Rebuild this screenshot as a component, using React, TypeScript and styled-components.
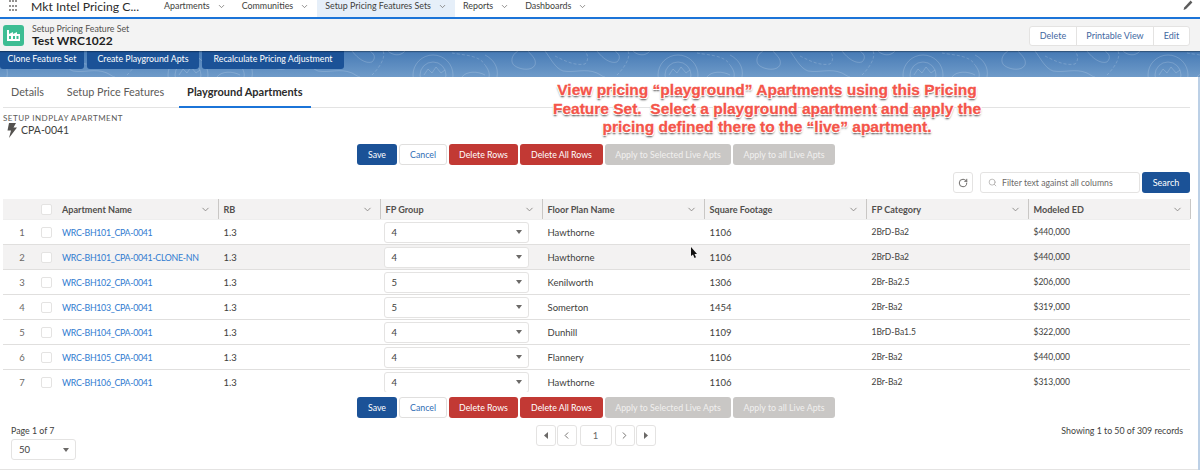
import React from 'react';
import styled, { createGlobalStyle } from 'styled-components';
import { ChevronDown, RotateCw, Search, ChevronLeft, ChevronRight } from 'lucide-react';

const Global = createGlobalStyle`
  html, body { margin: 0; padding: 0; background: #fff; }
  body { font-family: Lato, "Open Sans", "Liberation Sans", sans-serif; color: #3e3e3c; font-size: 9.5px; }
  * { box-sizing: border-box; }
`;

const Page = styled.div`
  width: 1200px;
  height: 470px;
  overflow: hidden;
  background: #bcd0e6;
  display: flex;
  flex-direction: column;
`;

/* top nav */
const Nav = styled.nav`
  height: 19px;
  background: #fff;
  border-bottom: 2px solid #1b74d8;
  display: flex;
  align-items: flex-start;
  flex: none;
`;

const Waffle = styled.div`
  width: 8px;
  margin: 0 0 0 9px;
  display: grid;
  grid-template-columns: repeat(3, 2px);
  gap: 2.5px 1px;
  span { height: 2px; background: #706e6b; border-radius: 1px; }
`;

const AppName = styled.div`
  margin-left: 14px;
  width: 125px;
  font-size: 12.2px;
  line-height: 13px;
  color: #2b2b2b;
  white-space: nowrap;
`;

const NavItem = styled.div<{ $active?: boolean }>`
  height: 17px;
  padding: 0 8px;
  display: flex;
  align-items: flex-start;
  gap: 7px;
  font-size: 8.9px;
  line-height: 12px;
  color: #3e3e3c;
  background: ${(p) => (p.$active ? '#e6eff9' : 'transparent')};
  svg { margin-top: 2px; color: #706e6b; }
`;

const PencilSlot = styled.div`
  margin-left: auto;
  margin-right: 7px;
  color: #5c5c5c;
`;

/* record header */
const RecordHeader = styled.header`
  height: 32px;
  flex: none;
  background: #f3f3f3;
  box-shadow: 0 1px 1px rgba(0, 0, 0, 0.3);
  display: flex;
  align-items: center;
  padding: 0 10px 0 3px;
  position: relative;
  z-index: 1;
`;

const Logo = styled.div`
  width: 21px;
  height: 21px;
  border-radius: 3px;
  background: #3dbd93;
  display: flex;
  align-items: center;
  justify-content: center;
  margin-right: 8px;
`;

const Titles = styled.div`
  display: flex;
  flex-direction: column;
`;

const Subtitle = styled.div`
  font-size: 8.8px;
  line-height: 11px;
  color: #54524f;
`;

const Title = styled.div`
  font-size: 12px;
  line-height: 14px;
  font-weight: 700;
  color: #1f1f1f;
`;

const ButtonGroup = styled.div`
  margin-left: auto;
  margin-top: 1px;
  display: flex;
  height: 20px;
  background: #fff;
  border: 1px solid #e4e3e2;
  border-radius: 3px;
`;

const GroupButton = styled.div<{ $w: number }>`
  width: ${(p) => p.$w}px;
  display: flex;
  align-items: center;
  justify-content: center;
  color: #43689f;
  font-size: 9px;
  & + & { border-left: 1px solid #e4e3e2; }
`;

/* banner */
const Banner = styled.div`
  height: 26px;
  flex: none;
  position: relative;
  background: linear-gradient(#467ab5, #6f9bc9);
  display: flex;
  align-items: flex-start;
  gap: 3px;
  overflow: hidden;
`;

const Topo = styled.svg`
  position: absolute;
  inset: 0;
  width: 100%;
  height: 100%;
`;

const BannerButton = styled.div<{ $w: number }>`
  position: relative;
  width: ${(p) => p.$w}px;
  height: 18px;
  padding-bottom: 3px;
  background: #1b5297;
  color: #fff;
  font-size: 8.8px;
  display: flex;
  align-items: center;
  justify-content: center;
  border-radius: 0 0 3px 3px;
`;

/* card */
const Card = styled.main`
  flex: 1;
  margin-right: 2px;
  padding: 0 8px 0 3px;
  background: #fff;
  position: relative;
  border-bottom: 1px solid #e4e3e2;
  overflow: hidden;
`;

const Tabs = styled.div`
  height: 31px;
  border-bottom: 1px solid #e3e3e3;
  display: flex;
  gap: 7px;
`;

const Tab = styled.div<{ $active?: boolean }>`
  height: 31px;
  padding: 0 8px;
  display: flex;
  align-items: center;
  font-size: ${(p) => (p.$active ? 11 : 10.8)}px;
  color: ${(p) => (p.$active ? '#2b2b2b' : '#5b5a58')};
  font-weight: ${(p) => (p.$active ? 700 : 400)};
  border-bottom: 2px solid ${(p) => (p.$active ? '#1b74d8' : 'transparent')};
`;

const FieldLabel = styled.div`
  margin-top: 6px;
  font-size: 8px;
  line-height: 9px;
  letter-spacing: 0.5px;
  color: #5b5a58;
`;

const FieldValue = styled.div`
  display: flex;
  align-items: center;
  gap: 3px;
  height: 14px;
  font-size: 10.5px;
  color: #3e3e3c;
  margin-left: 3px;
`;

const ActionRow = styled.div<{ $top: number }>`
  margin-top: ${(p) => p.$top}px;
  display: flex;
  justify-content: center;
  gap: 2px;
  height: 21px;
  padding-right: 1px;
`;

const ActionButton = styled.div<{ $kind: 'brand' | 'plain' | 'danger' | 'off'; $w: number }>`
  width: ${(p) => p.$w}px;
  height: 21px;
  border-radius: 3px;
  display: flex;
  align-items: center;
  justify-content: center;
  font-size: 8.8px;
  color: ${(p) => (p.$kind === 'plain' ? '#2f6db5' : p.$kind === 'off' ? '#f1f0ef' : '#fff')};
  background: ${(p) =>
    p.$kind === 'brand' ? '#1b5297' : p.$kind === 'danger' ? '#c23934' : p.$kind === 'off' ? '#c9c7c5' : '#fff'};
  border: 1px solid ${(p) => (p.$kind === 'plain' ? '#e0dfde' : 'transparent')};
`;

const Toolbar = styled.div`
  margin-top: 7px;
  height: 21px;
  display: flex;
  justify-content: flex-end;
  align-items: stretch;
`;

const IconBox = styled.div`
  width: 20px;
  border: 1px solid #e4e3e2;
  border-radius: 3px;
  display: flex;
  align-items: center;
  justify-content: center;
  color: #54524f;
  margin-right: 7px;
`;

const FilterBox = styled.div`
  width: 160px;
  border: 1px solid #e4e3e2;
  border-radius: 3px;
  display: flex;
  align-items: center;
  gap: 5px;
  padding-left: 7px;
  color: #6b6967;
  font-size: 8.7px;
  svg { color: #a9a7a5; }
`;

const SearchButton = styled.div`
  width: 48px;
  margin-left: 2px;
  background: #1b5297;
  color: #fff;
  border-radius: 3px;
  display: flex;
  align-items: center;
  justify-content: center;
  font-size: 9px;
`;

/* grid */
const HeadRow = styled.div`
  margin-top: 6px;
  height: 21px;
  background: #f3f2f2;
  display: grid;
  grid-template-columns: 38px 21px 156.5px repeat(6, 162px);
  border-bottom: 1px solid #eeeeee;
`;

const HeadCell = styled.div<{ $edge?: boolean }>`
  display: flex;
  align-items: center;
  justify-content: space-between;
  padding: 0 7px 0 ${(p) => (p.$edge ? 0 : 5)}px;
  font-size: 9.1px;
  font-weight: 700;
  color: #514f4d;
  border-right: 1px solid #c9c7c5;
  svg { color: #8a8886; }
`;

const Body = styled.div`
  height: 172px;
  overflow: hidden;
`;

const Row = styled.div<{ $hover?: boolean }>`
  height: 25px;
  display: grid;
  grid-template-columns: 38px 21px 156.5px repeat(6, 162px);
  align-items: center;
  background: ${(p) => (p.$hover ? '#f3f2f2' : '#fff')};
  border-bottom: 1px solid #e0dfde;
  font-size: 9.5px;
`;

const RowNum = styled.div`
  text-align: center;
  color: #6b6967;
`;

const Check = styled.div`
  align-self: center;
  width: 11px;
  height: 11px;
  background: #fff;
  border: 1px solid #e4e3e2;
  border-radius: 2px;
`;

const Cell = styled.div<{ $narrow?: boolean }>`
  padding-left: 5px;
  color: #3e3e3c;
  font-size: ${(p) => (p.$narrow ? 8.5 : 9.5)}px;
`;

const NameLink = styled.div`
  color: #2f7bd0;
  white-space: nowrap;
  font-size: 8.8px;
  letter-spacing: -0.3px;
`;

const FakeSelect = styled.div<{ $w: number }>`
  width: ${(p) => p.$w}px;
  height: 21px;
  background: #fff;
  border: 1px solid #e4e3e2;
  border-radius: 3px;
  display: flex;
  align-items: center;
  justify-content: space-between;
  padding: 0 6px 0 7px;
  color: #3e3e3c;
  font-size: 9.5px;
`;

const SelectCell = styled.div`
  padding-left: 3px;
`;

const Caret = styled.span`
  width: 0;
  height: 0;
  border-left: 3.5px solid transparent;
  border-right: 3.5px solid transparent;
  border-top: 4px solid #6b6967;
`;

/* footer */
const Footer = styled.div`
  margin-top: 7px;
  display: grid;
  grid-template-columns: 1fr auto 1fr;
`;

const PageInfo = styled.div`
  padding-left: 8px;
  display: flex;
  flex-direction: column;
  gap: 2px;
  line-height: 12px;
  font-size: 8.8px;
`;

const Pager = styled.div`
  display: flex;
  gap: 1px;
  height: 21px;
  margin-left: -2px;
`;

const PageButton = styled.div<{ $w?: number; $gap?: boolean }>`
  width: ${(p) => p.$w ?? 20}px;
  margin: ${(p) => (p.$gap ? '0 2px' : '0')};
  border: 1px solid #e4e3e2;
  border-radius: 3px;
  display: flex;
  align-items: center;
  justify-content: center;
  color: #6b6967;
  font-size: 9.5px;
`;

const Showing = styled.div`
  text-align: right;
  padding-right: 7px;
  line-height: 12px;
  color: #3e3e3c;
  font-size: 8.8px;
`;

/* overlays */
const Callout = styled.div`
  position: absolute;
  left: 500px;
  top: 4px;
  width: 534px;
  text-align: center;
  font-family: "Liberation Sans", Arial, sans-serif;
  font-weight: 700;
  font-size: 15.5px;
  line-height: 18.5px;
  color: #f4554a;
  -webkit-text-stroke: 0.3px #f4554a;
  text-shadow:
    -1px -1px 0 #fff, 1px -1px 0 #fff, -1px 1px 0 #fff, 1px 1px 0 #fff,
    0 -1px 0 #fff, 0 1px 0 #fff, -1px 0 0 #fff, 1px 0 0 #fff,
    0 2px 2px rgba(0, 0, 0, 0.8);
`;

const Cursor = styled.svg`
  position: absolute;
  left: 690px;
  top: 170px;
`;

const rows = [
  ['WRC-BH101_CPA-0041', '4', 'Hawthorne', '1106', '2BrD-Ba2', '$440,000'],
  ['WRC-BH101_CPA-0041-CLONE-NN', '4', 'Hawthorne', '1106', '2BrD-Ba2', '$440,000'],
  ['WRC-BH102_CPA-0041', '5', 'Kenilworth', '1306', '2Br-Ba2.5', '$206,000'],
  ['WRC-BH103_CPA-0041', '5', 'Somerton', '1454', '2Br-Ba2', '$319,000'],
  ['WRC-BH104_CPA-0041', '4', 'Dunhill', '1109', '1BrD-Ba1.5', '$322,000'],
  ['WRC-BH105_CPA-0041', '4', 'Flannery', '1106', '2Br-Ba2', '$440,000'],
  ['WRC-BH106_CPA-0041', '4', 'Hawthorne', '1106', '2Br-Ba2', '$313,000'],
];

const columns = ['RB', 'FP Group', 'Floor Plan Name', 'Square Footage', 'FP Category', 'Modeled ED'];

const Actions = ({ top }: { top: number }) => (
  <ActionRow $top={top}>
    <ActionButton $kind="brand" $w={40}>Save</ActionButton>
    <ActionButton $kind="plain" $w={48}>Cancel</ActionButton>
    <ActionButton $kind="danger" $w={69}>Delete Rows</ActionButton>
    <ActionButton $kind="danger" $w={83}>Delete All Rows</ActionButton>
    <ActionButton $kind="off" $w={126}>Apply to Selected Live Apts</ActionButton>
    <ActionButton $kind="off" $w={102}>Apply to all Live Apts</ActionButton>
  </ActionRow>
);

const TopoLines = () => (
  <Topo aria-hidden="true">
    <defs>
      <pattern id="topo" width="245" height="26" patternUnits="userSpaceOnUse" patternTransform="translate(-5 0)">
        <g fill="none" stroke="rgba(255,255,255,0.22)" strokeWidth="0.8">
          <path d="M33 0C26 4 25 12 30 15C36 19 47 20 50 14C52 8 46 4 43 0" />
          <path d="M60 0C66 8 70 17 78 20C90 22 100 17 112 22C116 24 118 26 120 26" />
          <path d="M70 5C80 10 90 15 100 13C104 9 103 4 100 0" strokeDasharray="3 2" />
          <path d="M112 0C118 8 126 13 132 11C137 6 133 2 130 0" />
          <path d="M148 0C152 4 160 6 165 0" />
          <path d="M143 0C146 6 140 16 132 24" strokeDasharray="3 2" />
          <circle cx="193" cy="24" r="20" />
          <circle cx="193" cy="24" r="13" />
          <path d="M184 24L188 18L192 22L196 16L201 22L205 19" />
          <path d="M212 2C222 4 240 4 245 14" strokeDasharray="3 2" />
          <path d="M222 26C226 20 238 20 245 24" />
          <path d="M0 4C8 8 14 16 12 26" />
          <path d="M0 14C3 18 5 22 4 26" />
        </g>
      </pattern>
    </defs>
    <rect width="100%" height="100%" fill="url(#topo)" />
  </Topo>
);

export default function App() {
  return (
    <Page>
      <Global />
      <Nav>
        <Waffle>{Array.from({ length: 9 }, (_, i) => <span key={i} />)}</Waffle>
        <AppName>Mkt Intel Pricing C...</AppName>
        <NavItem>Apartments <ChevronDown size={9} /></NavItem>
        <NavItem>Communities <ChevronDown size={9} /></NavItem>
        <NavItem $active>Setup Pricing Features Sets <ChevronDown size={9} /></NavItem>
        <NavItem>Reports <ChevronDown size={9} /></NavItem>
        <NavItem>Dashboards <ChevronDown size={9} /></NavItem>
        <PencilSlot>
          <svg width="10" height="11" viewBox="0 0 10 11">
            <path d="M7.6 0.6L9.4 2.4L3 9L0.6 10L1.2 7.4Z" fill="currentColor" />
          </svg>
        </PencilSlot>
      </Nav>

      <RecordHeader>
        <Logo>
          <svg width="15" height="13" viewBox="0 0 15 13">
            <path d="M1 1H3V5L7 3V5L11 3V5H14V12H1Z" fill="#fff" />
            <path d="M3 7H5V10H3ZM7 7H9V10H7ZM10.500 7H12.500V10H10.500Z" fill="#3dbd93" />
          </svg>
        </Logo>
        <Titles>
          <Subtitle>Setup Pricing Feature Set</Subtitle>
          <Title>Test WRC1022</Title>
        </Titles>
        <ButtonGroup>
          <GroupButton $w={46}>Delete</GroupButton>
          <GroupButton $w={77}>Printable View</GroupButton>
          <GroupButton $w={36}>Edit</GroupButton>
        </ButtonGroup>
      </RecordHeader>

      <Banner>
        <TopoLines />
        <BannerButton $w={84}>Clone Feature Set</BannerButton>
        <BannerButton $w={112}>Create Playground Apts</BannerButton>
        <BannerButton $w={142}>Recalculate Pricing Adjustment</BannerButton>
      </Banner>

      <Card>
        <Tabs>
          <Tab>Details</Tab>
          <Tab>Setup Price Features</Tab>
          <Tab $active>Playground Apartments</Tab>
        </Tabs>
        <FieldLabel>SETUP INDPLAY APARTMENT</FieldLabel>
        <FieldValue>
          <svg width="12" height="15" viewBox="0 0 12 15">
            <path d="M3 0H10L7.500 4.500H11L3 15L5 7.500H1.500Z" fill="#54524f" />
          </svg>
          CPA-0041
        </FieldValue>

        <Actions top={7} />

        <Toolbar>
          <IconBox><RotateCw size={10} /></IconBox>
          <FilterBox><Search size={9} />Filter text against all columns</FilterBox>
          <SearchButton>Search</SearchButton>
        </Toolbar>

        <HeadRow>
          <span />
          <Check />
          <HeadCell $edge>Apartment Name <ChevronDown size={11} /></HeadCell>
          {columns.map((c) => (
            <HeadCell key={c}>{c} <ChevronDown size={11} /></HeadCell>
          ))}
        </HeadRow>

        <Body>
          {rows.map((r, i) => (
            <Row key={r[0]} $hover={i === 1}>
              <RowNum>{i + 1}</RowNum>
              <Check />
              <NameLink>{r[0]}</NameLink>
              <Cell>1.3</Cell>
              <SelectCell>
                <FakeSelect $w={145}>{r[1]}<Caret /></FakeSelect>
              </SelectCell>
              <Cell>{r[2]}</Cell>
              <Cell>{r[3]}</Cell>
              <Cell $narrow>{r[4]}</Cell>
              <Cell $narrow>{r[5]}</Cell>
            </Row>
          ))}
        </Body>

        <Actions top={5} />

        <Footer>
          <PageInfo>
            Page 1 of 7
            <FakeSelect $w={65}>50<Caret /></FakeSelect>
          </PageInfo>
          <Pager>
            <PageButton>
              <svg width="6" height="7" viewBox="0 0 6 7"><path d="M5 0V7L1 3.500Z" fill="#6b6967" /></svg>
            </PageButton>
            <PageButton><ChevronLeft size={11} /></PageButton>
            <PageButton $w={32} $gap>1</PageButton>
            <PageButton><ChevronRight size={11} /></PageButton>
            <PageButton>
              <svg width="6" height="7" viewBox="0 0 6 7"><path d="M1 0V7L5 3.500Z" fill="#6b6967" /></svg>
            </PageButton>
          </Pager>
          <Showing>Showing 1 to 50 of 309 records</Showing>
        </Footer>

        <Callout>
          View pricing “playground” Apartments using this Pricing
          <br />
          Feature Set.&nbsp; Select a playground apartment and apply the
          <br />
          pricing defined there to the “live” apartment.
        </Callout>

        <Cursor width="8" height="12" viewBox="0 0 8 12">
          <path d="M1 0V9L3 7.500L4.500 11L6 10.300L4.500 7H7Z" fill="#111" />
        </Cursor>
      </Card>
    </Page>
  );
}
